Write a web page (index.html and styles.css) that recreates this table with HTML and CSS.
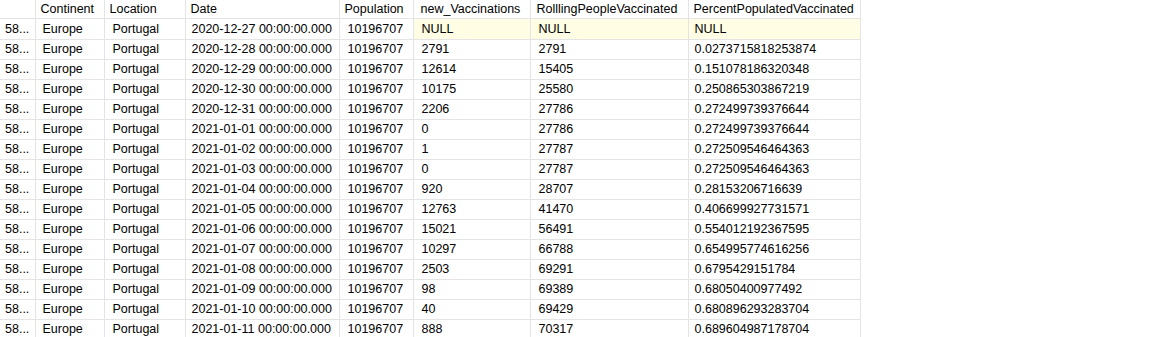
FILE: index.html
```html
<!DOCTYPE html>
<html lang="en">
<head>
    <meta charset="UTF-8">
    <title>Results</title>
    <link rel="stylesheet" href="styles.css">
</head>
<body>
    <table class="grid">
        <thead>
            <tr>
                <th class="c-row"></th>
                <th class="c-continent">Continent</th>
                <th class="c-location">Location</th>
                <th class="c-date">Date</th>
                <th class="c-pop">Population</th>
                <th class="c-new">new_Vaccinations</th>
                <th class="c-rolling">RolllingPeopleVaccinated</th>
                <th class="c-percent">PercentPopulatedVaccinated</th>
            </tr>
        </thead>
        <tbody id="rows"></tbody>
    </table>

    <script>
        // date, new_Vaccinations, RolllingPeopleVaccinated, PercentPopulatedVaccinated
        const data = [
            ["2020-12-27", "NULL", "NULL", "NULL"],
            ["2020-12-28", "2791", "2791", "0.0273715818253874"],
            ["2020-12-29", "12614", "15405", "0.151078186320348"],
            ["2020-12-30", "10175", "25580", "0.250865303867219"],
            ["2020-12-31", "2206", "27786", "0.272499739376644"],
            ["2021-01-01", "0", "27786", "0.272499739376644"],
            ["2021-01-02", "1", "27787", "0.272509546464363"],
            ["2021-01-03", "0", "27787", "0.272509546464363"],
            ["2021-01-04", "920", "28707", "0.28153206716639"],
            ["2021-01-05", "12763", "41470", "0.406699927731571"],
            ["2021-01-06", "15021", "56491", "0.554012192367595"],
            ["2021-01-07", "10297", "66788", "0.654995774616256"],
            ["2021-01-08", "2503", "69291", "0.6795429151784"],
            ["2021-01-09", "98", "69389", "0.68050400977492"],
            ["2021-01-10", "40", "69429", "0.680896293283704"],
            ["2021-01-11", "888", "70317", "0.689604987178704"]
        ];

        const tbody = document.getElementById("rows");
        data.forEach(row => {
            const tr = document.createElement("tr");
            const cells = ["58...", "Europe", "Portugal", row[0] + " 00:00:00.000", "10196707", row[1], row[2], row[3]];
            cells.forEach(text => {
                const td = document.createElement("td");
                td.textContent = text;
                if (text === "NULL") td.className = "null";
                tr.appendChild(td);
            });
            tbody.appendChild(tr);
        });
    </script>
</body>
</html>
```

FILE: styles.css
```css
body {
    margin: 0;
    background: white;
    font-family: "Liberation Sans", Arial, sans-serif;
    font-size: 12.5px;
    color: #000;
}

.grid {
    border-collapse: collapse;
    table-layout: fixed;
    width: 860px;
}

th,
td {
    box-sizing: border-box;
    border-right: 1px solid #e4e4e4;
    border-bottom: 1px solid #e4e4e4;
    white-space: nowrap;
    overflow: hidden;
    text-align: left;
    padding: 0;
}

/* column widths, right grid line included */
.c-row { width: 35px; }
.c-continent { width: 69px; }
.c-location { width: 81px; }
.c-date { width: 154px; }
.c-pop { width: 74px; }
.c-new { width: 117px; }
.c-rolling { width: 158px; }
.c-percent { width: 172px; }

th {
    height: 18px;
    font-weight: normal;
    padding-left: 5px;
}

th.c-new { padding-left: 7px; }
th.c-rolling { padding-left: 6px; }

td {
    height: 20px;
    padding-left: 7px;
}

tbody tr:first-child td {
    height: 21px;
}

td:first-child {
    padding-left: 5px;
}

td:nth-child(4),
td:nth-child(8) {
    padding-left: 6px;
}

td:nth-child(3),
td:nth-child(5),
td:nth-child(6),
td:nth-child(7) {
    padding-left: 8px;
}

td.null {
    background: #fffde3;
}
```
